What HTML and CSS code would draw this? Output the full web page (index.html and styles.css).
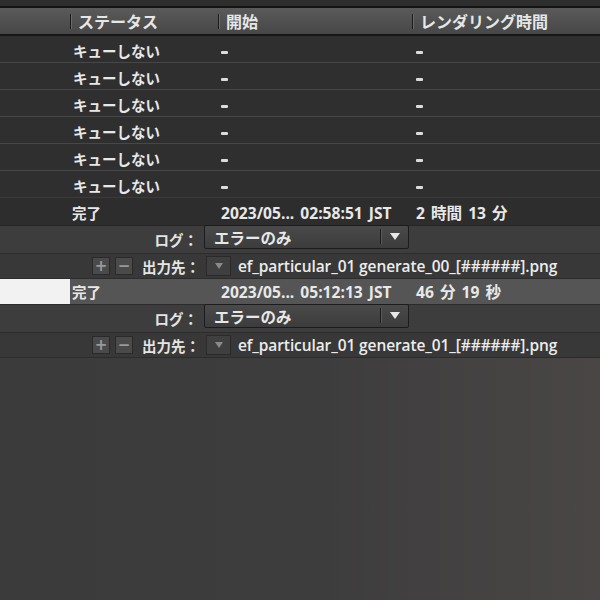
FILE: index.html
```html
<!DOCTYPE html>
<html lang="ja">
<head>
<meta charset="utf-8">
<link rel="stylesheet" href="styles.css">
</head>
<body>
<div class="panel">
  <div class="topbar"></div>
  <div class="header">
    <div class="hcell c0"></div>
    <div class="hcell c1"><span class="sep"></span>ステータス</div>
    <div class="hcell c2"><span class="sep"></span>開始</div>
    <div class="hcell c3"><span class="sep"></span>レンダリング時間</div>
  </div>
  <div class="row queued"><div class="c0"></div><div class="c1">キューしない</div><div class="c2"><span class="dash"></span></div><div class="c3"><span class="dash"></span></div></div>
  <div class="row queued"><div class="c0"></div><div class="c1">キューしない</div><div class="c2"><span class="dash"></span></div><div class="c3"><span class="dash"></span></div></div>
  <div class="row queued"><div class="c0"></div><div class="c1">キューしない</div><div class="c2"><span class="dash"></span></div><div class="c3"><span class="dash"></span></div></div>
  <div class="row queued"><div class="c0"></div><div class="c1">キューしない</div><div class="c2"><span class="dash"></span></div><div class="c3"><span class="dash"></span></div></div>
  <div class="row queued"><div class="c0"></div><div class="c1">キューしない</div><div class="c2"><span class="dash"></span></div><div class="c3"><span class="dash"></span></div></div>
  <div class="row queued last"><div class="c0"></div><div class="c1">キューしない</div><div class="c2"><span class="dash"></span></div><div class="c3"><span class="dash"></span></div></div>

  <div class="row done"><div class="c0"></div><div class="c1">完了</div><div class="c2 num">2023/05... 02:58:51 JST</div><div class="c3 num">2 時間 13 分</div></div>
  <div class="sub log">
    <div class="label">ログ：</div>
    <div class="select"><span class="seltext">エラーのみ</span><span class="selbtn"><span class="tri"></span></span></div>
  </div>
  <div class="sub out">
    <div class="btns"><span class="btn">+</span><span class="btn">−</span></div>
    <div class="label">出力先：</div>
    <div class="mini"><span class="tri dim"></span></div>
    <div class="file">ef_particular_01 generate_00_[######].png</div>
  </div>

  <div class="row done selected"><div class="c0 mark"></div><div class="c1">完了</div><div class="c2 num">2023/05... 05:12:13 JST</div><div class="c3 num">46 分 19 秒</div></div>
  <div class="sub log">
    <div class="label">ログ：</div>
    <div class="select"><span class="seltext">エラーのみ</span><span class="selbtn"><span class="tri"></span></span></div>
  </div>
  <div class="sub out">
    <div class="btns"><span class="btn">+</span><span class="btn">−</span></div>
    <div class="label">出力先：</div>
    <div class="mini"><span class="tri dim"></span></div>
    <div class="file">ef_particular_01 generate_01_[######].png</div>
  </div>
  <div class="rest"></div>
</div>
</body>
</html>
```
FILE: styles.css
```css
html, body {
  margin: 0;
  padding: 0;
  width: 600px;
  height: 600px;
  overflow: hidden;
  background: #3c3c3c;
}
.panel {
  width: 600px;
  height: 600px;
  display: flex;
  flex-direction: column;
  font-family: "Noto Sans CJK JP", "Open Sans", sans-serif;
  font-weight: bold;
  font-size: 14.5px;
  color: #e8e8e8;
  background: linear-gradient(90deg, #3b3b3b 0%, #3e3d3d 55%, #4a4646 100%);
}
.topbar {
  height: 6px;
  background: #2e2e2e;
  border-bottom: 2px solid #141414;
  flex: none;
}
.header, .row {
  display: grid;
  grid-template-columns: 70px 148px 194px 1fr;
  align-items: center;
  flex: none;
  box-sizing: border-box;
}
.header {
  height: 28px;
  background: linear-gradient(180deg, #5a5a5a, #474747);
  border-bottom: 2px solid #161616;
  color: #e6e6e6;
  font-size: 16px;
}
.hcell {
  display: flex;
  align-items: center;
  height: 100%;
}
.sep {
  width: 1px;
  height: 15px;
  background: #1a1a1a;
  margin-right: 7px;
  box-shadow: 1px 0 0 #6a6a6a;
}
.row {
  height: 27px;
  background: #2f2f2f;
  border-bottom: 1px solid #474747;
  padding-top: 2px;
}
.row.last { border-bottom: 1px solid #3b3b3b; }
.row .c1 { padding-left: 3px; }
.row .c2 { padding-left: 3px; }
.row .c3 { padding-left: 4px; }
.dash {
  display: inline-block;
  width: 7px;
  height: 3px;
  border-radius: 1px;
  background: #dcdcdc;
  vertical-align: middle;
}
.row.done {
  height: 28px;
  padding-top: 2px;
  background: #2d2d2d;
  border-bottom: 1px solid #262626;
}
.row.done .c1 { padding-left: 2px; }
.num {
  font-family: "Open Sans", "Noto Sans CJK JP", sans-serif;
  font-weight: 700;
  font-size: 15.6px;
  word-spacing: 2px;
  white-space: nowrap;
}
.row.selected {
  height: 26px;
  padding-top: 0;
  background: #555555;
  border-bottom: 1px solid #2b2b2b;
}
.row.selected .c0 { height: 100%; }
.mark { background: #f2f2f2; }
.sub {
  display: flex;
  align-items: center;
  flex: none;
  white-space: nowrap;
}
.log {
  height: 27px;
  background: #3d3d3d;
  border-bottom: 1px solid #2c2c2c;
}
.out {
  height: 24px;
  background: #383838;
  border-bottom: 1px solid #2c2c2c;
}
.log .label {
  width: 198px;
  text-align: right;
}
.label { color: #e4e4e4; }
.select {
  margin-left: 6px;
  width: 205px;
  height: 24px;
  margin-top: -6px;
  border: 1px solid #1c1c1c;
  border-radius: 2px;
  background: linear-gradient(180deg, #4a4a4a, #3c3c3c);
  display: flex;
  align-items: center;
  box-sizing: border-box;
}
.seltext {
  flex: 1;
  padding-left: 9px;
  font-size: 15.5px;
  color: #e8e8e8;
}
.selbtn {
  width: 27px;
  height: 15px;
  border-left: 1px solid #1a1a1a;
  box-shadow: inset 1px 0 0 #5a5a5a;
  display: flex;
  align-items: center;
  justify-content: center;
}
.tri {
  width: 0;
  height: 0;
  border-left: 5px solid transparent;
  border-right: 5px solid transparent;
  border-top: 7px solid #e8e8e8;
}
.tri.dim {
  border-left-width: 4px;
  border-right-width: 4px;
  border-top: 6px solid #8a8a8a;
}
.btns {
  margin-left: 92px;
  display: flex;
  gap: 5px;
}
.btn {
  width: 18px;
  height: 18px;
  box-sizing: border-box;
  border: 1px solid #2a2a2a;
  background: #4a4a4a;
  color: #9a9a9a;
  font-family: "DejaVu Sans", sans-serif;
  font-size: 15px;
  line-height: 16px;
  text-align: center;
}
.out .label {
  margin-left: 9px;
}
.mini {
  margin-left: 6px;
  width: 25px;
  height: 20px;
  box-sizing: border-box;
  border: 1px solid #2a2a2a;
  background: #3f3f3f;
  display: flex;
  align-items: center;
  justify-content: center;
}
.file {
  margin-left: 7px;
  font-family: "Open Sans", "Noto Sans", sans-serif;
  font-weight: 600;
  font-size: 15.5px;
  color: #ececec;
  letter-spacing: -0.1px;
}
.rest {
  flex: 1;
}
```
